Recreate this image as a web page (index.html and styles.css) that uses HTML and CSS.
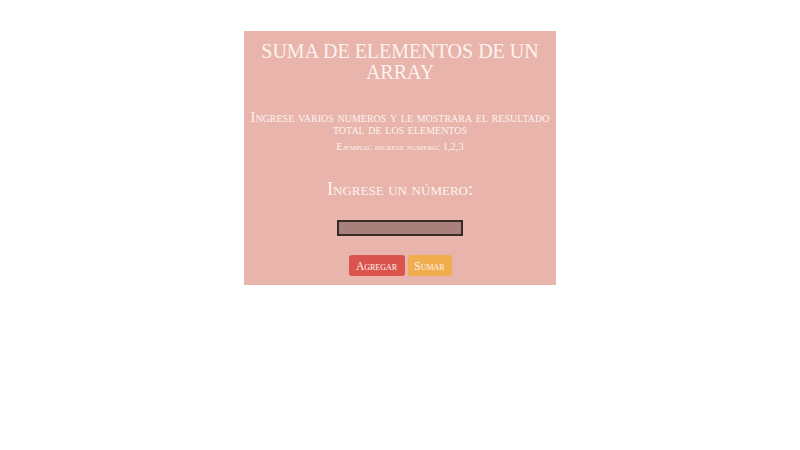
FILE: index.html
```html
<!DOCTYPE html>
<html lang="es">
  <head>
    <meta charset="UTF-8" />
    <meta name="viewport" content="width=device-width, initial-scale=1.0" />
    <title>Suma de elementos de un array</title>
    <link rel="stylesheet" href="styles.css">
  </head>
  <body>
    <div class="caja">
      <h1>SUMA DE ELEMENTOS DE UN ARRAY</h1>
      <p class="descripcion">Ingrese varios numeros y le mostrara el resultado total de los elementos</p>
      <p class="ejemplo">Ejemplo: ingrese numero: 1,2,3</p>

      <h2>Ingrese un número:</h2>
      <input type="text" id="numero" />

      <div class="botones">
        <button class="btn btn-agregar" onclick="agregar()">Agregar</button>
        <button class="btn btn-sumar" onclick="sumar()">Sumar</button>
      </div>
    </div>

    <script>
      const numeros = [];

      function agregar() {
        const campo = document.getElementById("numero");
        const valor = parseFloat(campo.value);
        if (!isNaN(valor)) {
          numeros.push(valor);
        }
        campo.value = "";
      }

      function sumar() {
        const total = numeros.reduce((a, b) => a + b, 0);
        alert("El total es: " + total);
      }
    </script>
  </body>
</html>
```

FILE: styles.css
```css
body,
html {
  margin: 0;
  padding: 0;
  background-color: #ffffff;
}

body {
  padding-top: 31px;
}

.caja {
  background-color: #e8b4ab;
  width: 312px;
  margin: 0 auto;
  padding: 10px 0 9px;
  text-align: center;
  color: #fdf3ee;
  font-family: "Liberation Serif", "DejaVu Serif", serif;
  font-variant: small-caps;
}

h1 {
  margin: 0 0 28px;
  font-size: 20px;
  font-weight: normal;
  line-height: 21px;
}

.descripcion {
  margin: 0 0 6px;
  font-size: 14.5px;
  line-height: 12px;
}

.ejemplo {
  margin: 0 0 27px;
  font-size: 10.5px;
}

h2 {
  margin: 0 0 20px;
  font-size: 18.5px;
  font-weight: normal;
}

input[type="text"] {
  width: 122px;
  height: 12px;
  background-color: #a8817d;
  border: 2px solid #3a2a28;
  border-radius: 0;
  padding: 0;
  display: block;
  margin: 0 auto 19px;
}

.botones {
  display: flex;
  justify-content: center;
  gap: 3px;
}

.btn {
  font-family: "Liberation Serif", "DejaVu Serif", serif;
  font-variant: small-caps;
  font-size: 11.5px;
  color: #fdf3ee;
  border: none;
  border-radius: 3px;
  height: 21px;
  padding: 0 4px;
  cursor: pointer;
}

.btn-agregar {
  background-color: #d9534f;
  width: 56px;
}

.btn-sumar {
  background-color: #f0ad4e;
  width: 44px;
}
```
